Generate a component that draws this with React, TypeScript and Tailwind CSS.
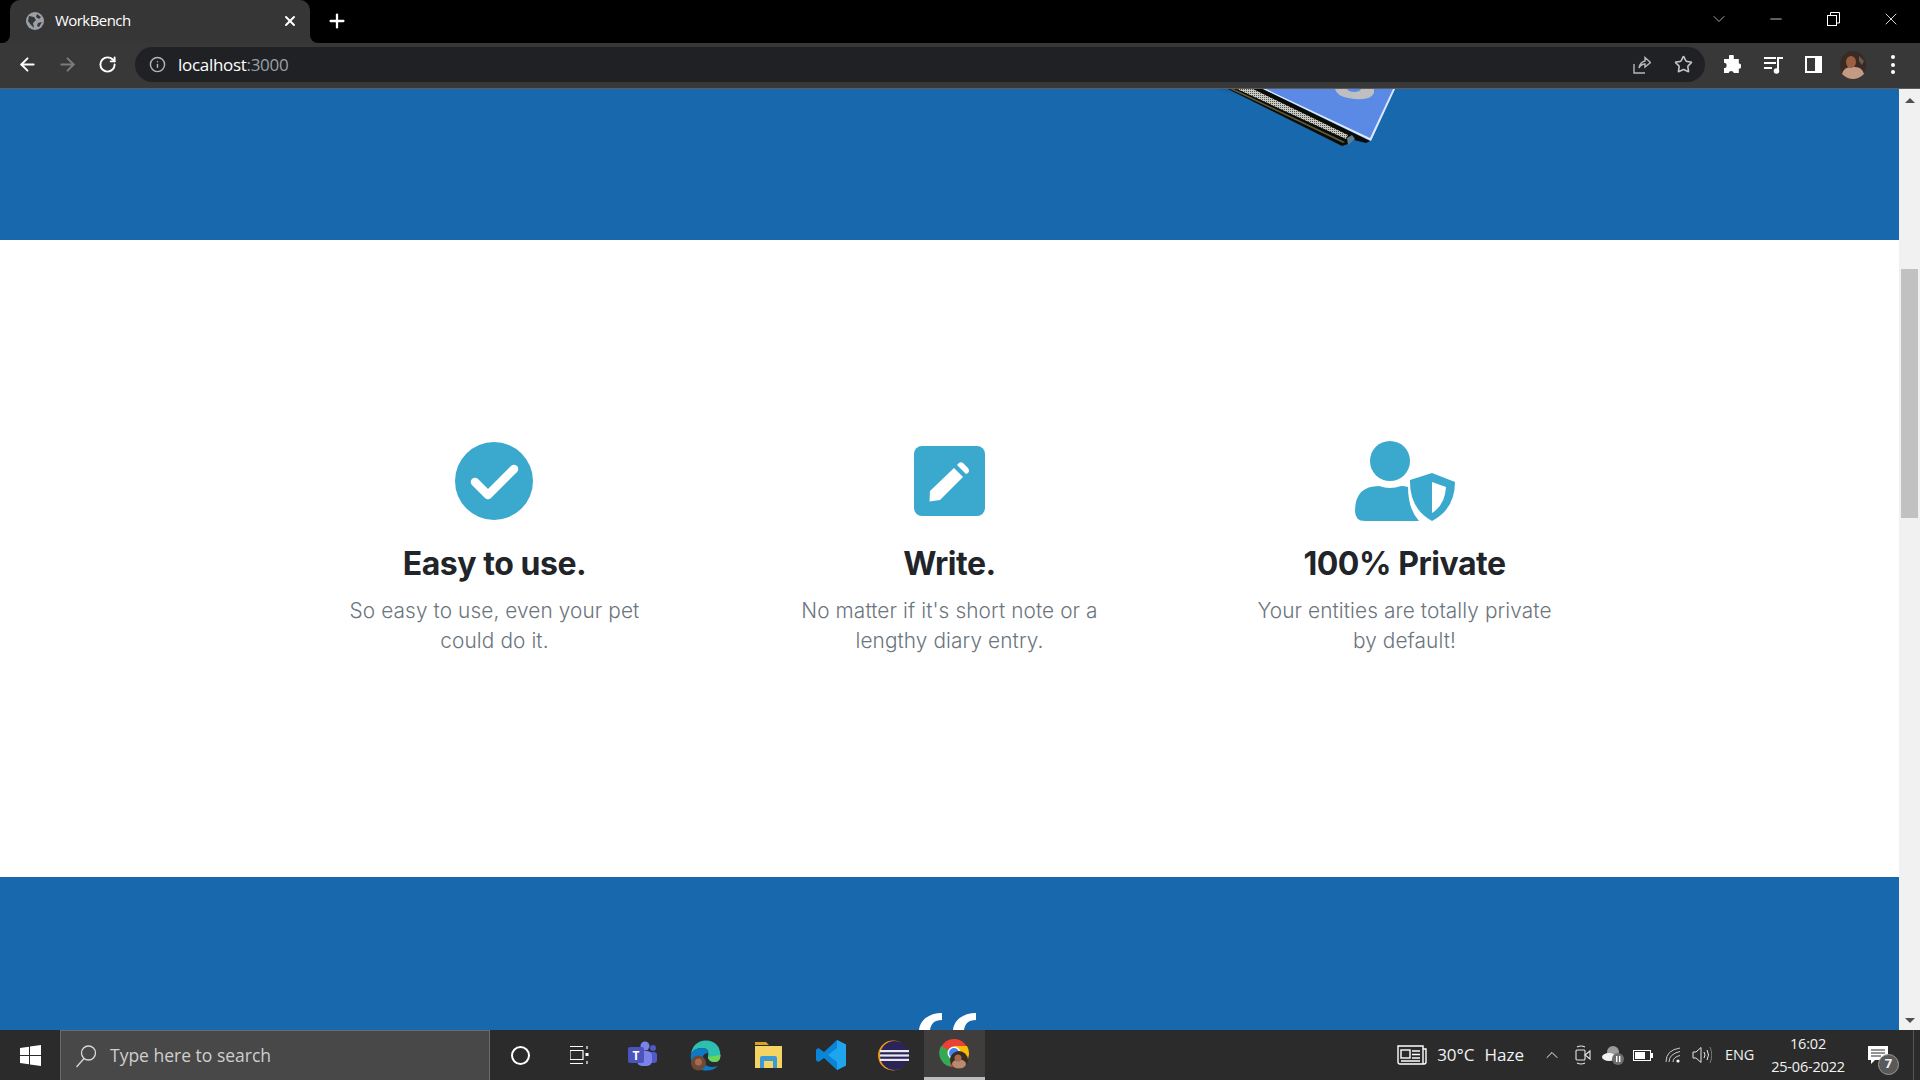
import { ArrowLeft, ArrowRight, RotateCw, Info, Star, Plus, X, ChevronDown, ChevronUp, Minus } from 'lucide-react';

const TEAL = '#3aa9cd';

const features = [
  { title: 'Easy to use.', lines: ['So easy to use, even your pet', 'could do it.'], icon: 'check' },
  { title: 'Write.', lines: ["No matter if it's short note or a", 'lengthy diary entry.'], icon: 'pen' },
  { title: '100% Private', lines: ['Your entities are totally private', 'by default!'], icon: 'user' },
];

function FeatureIcon({ name }: { name: string }) {
  if (name === 'check') {
    return (
      <svg className="mr-[2px]" width="78" height="78" viewBox="0 0 78 78">
        <circle cx="39" cy="39" r="39" fill={TEAL} />
        <path d="M20 40 L33 53 L59 27" fill="none" stroke="#fff" strokeWidth="8.5" strokeLinecap="round" strokeLinejoin="round" />
      </svg>
    );
  }
  if (name === 'pen') {
    return (
      <svg width="71" height="70" viewBox="0 0 71 70">
        <rect width="71" height="70" rx="8" fill={TEAL} />
        <path d="M16 45 L40 22 L49 31 L26 54 L15.5 55.5 Z" fill="#fff" />
        <path d="M43 19 L44 18 Q46 15 49 17 L54 22 Q56 25 54 27 L52 28 Z" fill="#fff" />
      </svg>
    );
  }
  return (
    <svg width="100" height="80" viewBox="0 0 100 80">
      <circle cx="35" cy="20" r="20" fill={TEAL} />
      <path d="M24 45 Q35 49 46 45 Q50 45 53 46 Q53 68 64 80 L10 80 Q0 80 0 70 Q0 45 24 45 Z" fill={TEAL} />
      <path d="M55 39 L77 32 L100 41 Q100 68 77 80 Q55 68 55 41 Z" fill={TEAL} />
      <path d="M77 41 L91 46 Q90 64 77 72 Z" fill="#fff" />
    </svg>
  );
}

function Avatar({ size }: { size: number }) {
  return (
    <svg width={size} height={size} viewBox="0 0 28 28">
      <ellipse cx="14" cy="14" rx="13" ry="14" fill="#3a2a24" />
      <path d="M3 23 Q5 15 14 16 Q23 15 25 23 Q20 28 14 28 Q8 28 3 23 Z" fill="#c39a84" />
      <ellipse cx="12" cy="11" rx="5" ry="6" fill="#9c5f42" />
      <path d="M20 5 L25 10 L23 14 L20 10 Z" fill="#6b5a50" />
    </svg>
  );
}

function Illustration() {
  return (
    <svg className="absolute left-[1200px] top-0" width="210" height="70" viewBox="0 0 210 70">
      <defs>
        <pattern id="dots" width="2" height="2" patternUnits="userSpaceOnUse">
          <rect width="2" height="2" fill="#c9c9c4" />
          <rect width="1" height="1" fill="#55564f" />
        </pattern>
        <linearGradient id="shade" x1="0.55" y1="0" x2="0.42" y2="0.25">
          <stop offset="0" stopColor="#0a3f6c" />
          <stop offset="1" stopColor="#1868ad" />
        </linearGradient>
      </defs>
      <path d="M14 0 L138 59 L147 55 L28 0 Z" fill="url(#shade)" />
      <path d="M28 0 L63 0 L170 52 L166 54 L150 50 L148 55 L142 57 Z" fill="#0b0b06" />
      <path d="M30 0 L34 0 L145 53 L143 54 Z" fill="#5a5b3e" />
      <path d="M37 0 L53 0 L148 46 L146 50 Z" fill="url(#dots)" />
      <path d="M147 49 L152 46 L155 50 L148 56 Z" fill="#5c7d99" />
      <path d="M63 0 L195 0 L171 51 Z" fill="#5b8ae6" />
      <path d="M195 0 L171 52 L63 0 L66 0 L170 49 L193 0 Z" fill="#dfe8fb" />
      <path d="M135 0 Q137 7 148 9 Q170 13 174 4 L174 0 L161 0 Q160 3 154 3 Q149 3 147 0 Z" fill="#bdbfc0" />
    </svg>
  );
}

function TitleBar() {
  return (
    <div className="h-[43px] bg-black flex items-end shrink-0">
      <div className="relative ml-[10px] w-[300px] h-[43px] bg-[#363636] rounded-t-[10px] flex items-center pl-[16px] pr-[12px] pb-[2px]">
        <div className="absolute left-[-8px] bottom-0 w-[8px] h-[8px] bg-[#363636]">
          <div className="w-full h-full bg-black rounded-br-[8px]" />
        </div>
        <div className="absolute right-[-8px] bottom-0 w-[8px] h-[8px] bg-[#363636]">
          <div className="w-full h-full bg-black rounded-bl-[8px]" />
        </div>
        <svg width="18" height="18" viewBox="0 0 18 18">
          <circle cx="9" cy="9" r="9" fill="#9aa0a6" />
          <path d="M3 4 L8 5 L10 8 L7 11 L8 16 L5 13 L2 9 Z M11 2 L15 5 L13 7 L10 5 Z M12 11 L16 10 L13 15 L11 14 Z" fill="#363636" />
        </svg>
        <span className="ml-[11px] text-[15px] text-white font-['Open_Sans',sans-serif] tracking-[-0.55px]">WorkBench</span>
        <X className="ml-auto text-white" size={16} strokeWidth={3} />
      </div>
      <div className="w-[54px] h-[43px] flex items-center justify-center pb-[2px]">
        <Plus className="text-white" size={22} strokeWidth={2.5} />
      </div>
      <div className="flex-1 h-[43px] flex items-center justify-end text-white pb-[5px]">
        <ChevronDown className="mr-[38px] text-[#c9c9c9]" size={20} strokeWidth={1} />
        <Minus className="mr-[42px]" size={18} strokeWidth={1} />
        <svg className="mr-[41px]" width="13" height="14" viewBox="0 0 13 14" fill="none" stroke="#fff">
          <rect x="0.5" y="3.5" width="9" height="10" />
          <path d="M3.5 3.5 V0.5 H12.5 V11 H9.5" />
        </svg>
        <X className="mr-[19px]" size={20} strokeWidth={1} />
      </div>
    </div>
  );
}

function Toolbar() {
  return (
    <div className="h-[46px] bg-[#383838] border-b border-[#5c5c5c] flex items-center shrink-0 pl-[7px] pb-[2px]">
      <div className="w-[40px] flex justify-center">
        <ArrowLeft className="text-white" size={21} strokeWidth={2.2} />
      </div>
      <div className="w-[40px] flex justify-center">
        <ArrowRight className="text-[#7c7c7c]" size={21} strokeWidth={2.2} />
      </div>
      <div className="w-[41px] flex justify-center">
        <RotateCw className="text-white" size={19} strokeWidth={2.4} />
      </div>
      <div className="ml-[7px] w-[1570px] h-[35px] rounded-full bg-[#202124] flex items-center pl-[14px] pr-[12px]">
        <Info className="text-[#b4b6b9]" size={17} strokeWidth={2} />
        <span className="ml-[12px] text-[17px] text-white font-['Open_Sans',sans-serif] tracking-[-0.3px]">
          localhost<span className="text-[#9aa0a6]">:3000</span>
        </span>
        <svg className="ml-auto mr-[23px]" width="18" height="18" viewBox="0 0 18 18" fill="none" stroke="#b4b6b9" strokeWidth="1.4">
          <path d="M1 8 V17 H12 M6 12 Q7 6 12 5 V1.5 L17.5 6.5 L12 11 V8 Q8 8 6 12 Z" />
        </svg>
        <Star className="text-[#c4c7ca]" size={19} strokeWidth={2} />
      </div>
      <div className="w-[47px] flex justify-center ml-[3px]">
        <svg width="18" height="19" viewBox="0 0 18 19" fill="#fff">
          <path d="M6 1.5 a2.4 2.4 0 0 1 4.8 0 V4 h5 v4.5 a2.6 2.6 0 0 1 0 5.2 V18 h-5 a2.7 2.7 0 0 0 -5.2 0 H1 v-5 a2.6 2.6 0 0 0 0 -5.2 V4 h5 Z" />
        </svg>
      </div>
      <div className="w-[36px] flex justify-center">
        <svg width="19" height="18" viewBox="0 0 19 18" fill="#fff">
          <rect x="0" y="1" width="12" height="2" />
          <rect x="0" y="6" width="12" height="2" />
          <rect x="0" y="11" width="8" height="2" />
          <rect x="13" y="1" width="6" height="2" />
          <rect x="13" y="1" width="2" height="14" />
          <circle cx="12.5" cy="15" r="2.8" />
        </svg>
      </div>
      <div className="w-[44px] flex justify-center">
        <svg width="17" height="17" viewBox="0 0 17 17">
          <rect width="17" height="17" fill="#fff" />
          <rect x="2" y="2" width="8" height="13" fill="#383838" />
        </svg>
      </div>
      <div className="w-[36px] flex justify-center">
        <Avatar size={28} />
      </div>
      <div className="w-[44px] flex flex-col items-center gap-[3.5px]">
        <div className="w-[4px] h-[4px] rounded-full bg-white" />
        <div className="w-[4px] h-[4px] rounded-full bg-white" />
        <div className="w-[4px] h-[4px] rounded-full bg-white" />
      </div>
    </div>
  );
}

function TrayIcon({ className, children }: { className: string; children: React.ReactNode }) {
  return <div className={`flex items-center justify-center ${className}`}>{children}</div>;
}

function Taskbar() {
  return (
    <div className="h-[50px] bg-[#2b2b2b] flex items-stretch shrink-0 text-white font-['Open_Sans',sans-serif]">
      <div className="w-[60px] flex items-center justify-center">
        <svg width="21" height="21" viewBox="0 0 21 21" fill="#fff">
          <path d="M0 3 L9 1.7 V10 H0 Z M10 1.5 L21 0 V10 H10 Z M0 11 H9 V19.3 L0 18 Z M10 11 H21 V21 L10 19.5 Z" />
        </svg>
      </div>
      <div className="w-[430px] bg-[#484848] border border-[#6b6b6b] border-b-0 flex items-center pl-[14px]">
        <svg width="22" height="24" viewBox="0 0 22 24" fill="none" stroke="#d9d9d9" strokeWidth="1.3">
          <circle cx="13.5" cy="9" r="7" />
          <path d="M9 14.5 L1.5 23" />
        </svg>
        <span className="ml-[13px] text-[17.5px] text-[#cfcfcf]">Type here to search</span>
      </div>
      <div className="w-[60px] flex items-center justify-center">
        <div className="w-[19px] h-[19px] rounded-full border-[2.5px] border-white" />
      </div>
      <div className="w-[60px] flex items-center justify-center">
        <svg width="20" height="20" viewBox="0 0 20 20" fill="none" stroke="#fff" strokeWidth="1.2">
          <path d="M0 1.5 H13 M0 18.5 H13 M0 5.5 H13 V14.5 H0 Z M17 1 V4 M17 16 V19" />
          <rect x="15.5" y="8" width="3" height="3" fill="#fff" stroke="none" />
        </svg>
      </div>
      <div className="w-[63px] flex items-center justify-center">
        <svg width="30" height="30" viewBox="0 0 30 30">
          <circle cx="18" cy="6" r="4.5" fill="#7b83eb" />
          <circle cx="26" cy="8" r="3" fill="#5059c9" />
          <rect x="21" y="12" width="9" height="11" rx="3" fill="#5059c9" />
          <rect x="10" y="11" width="15" height="15" rx="5" fill="#7b83eb" />
          <rect x="1" y="7" width="16" height="16" rx="2" fill="#4b53bc" />
          <text x="9" y="19.5" fontSize="12" fontWeight="700" fill="#fff" textAnchor="middle" fontFamily="Open Sans, sans-serif">T</text>
        </svg>
      </div>
      <div className="w-[65px] flex items-center justify-center">
        <svg width="31" height="31" viewBox="0 0 31 31">
          <path d="M1 14 Q3 1 16 0.5 Q30 1 30.5 16 Q30 22 25 22 Q18 22 18 17 Q20 8 12 8 Q4 8 1 14 Z" fill="#2dbfb0" />
          <path d="M18 17 L30.5 15 Q30 22 25 22 Q19 22 18 17 Z" fill="#6fd558" />
          <path d="M12 8 Q4 8 1 14 Q-1 26 12 30 Q22 32 28 26 Q18 29 14 23 Q10 14 18 13 Q17 8 12 8 Z" fill="#0c7ac4" />
          <circle cx="8.5" cy="23" r="7.5" fill="#6b4a3a" />
          <circle cx="8.5" cy="22" r="3.5" fill="#a9694a" />
        </svg>
      </div>
      <div className="w-[62px] flex items-center justify-center">
        <svg width="28" height="28" viewBox="0 0 28 28">
          <path d="M0 1 H11 L14 4 H0 Z" fill="#d9a21f" />
          <rect x="0" y="5" width="27" height="22" fill="#f6d463" />
          <path d="M5 27 V17 Q5 15 7 15 H20 Q22 15 22 17 V27 H18 V20 H9 V27 Z" fill="#3d9ad9" />
        </svg>
      </div>
      <div className="w-[62px] flex items-center justify-center">
        <svg width="30" height="30" viewBox="0 0 30 30">
          <path d="M21 0 L30 4.5 V25.5 L21 30 L8 18 L2.5 22 L0 20.5 V9.5 L2.5 8 L8 12 Z" fill="#0a84d6" />
          <path d="M21 0 L30 4.5 V25.5 L21 30 Z M21 8 L12 15 L21 22 Z" fill="#1fa5ee" />
        </svg>
      </div>
      <div className="w-[62px] flex items-center justify-center">
        <svg width="31" height="31" viewBox="0 0 31 31">
          <circle cx="15" cy="15.5" r="15" fill="#f09b20" />
          <circle cx="16.5" cy="15.5" r="14.5" fill="#2b2456" />
          <rect x="2" y="10" width="29" height="2.2" fill="#e8e8f2" />
          <rect x="2" y="14.4" width="29" height="2.2" fill="#e8e8f2" />
          <rect x="2" y="18.8" width="29" height="2.2" fill="#e8e8f2" />
        </svg>
      </div>
      <div className="w-[61px] bg-[#3f3e3d] border-b-[3px] border-[#bdbdbd] flex items-center justify-center">
        <svg width="31" height="31" viewBox="0 0 31 31">
          <circle cx="15" cy="15" r="14" fill="#ea4335" />
          <path d="M15 15 L2 8 A14 14 0 0 0 11 28.5 Z" fill="#34a853" />
          <path d="M15 15 L15 1 A14 14 0 0 1 28 10 Z" fill="#ea4335" />
          <path d="M15 8 H28 A14 14 0 0 1 27 24 Z" fill="#fbbc05" />
          <circle cx="15" cy="15" r="6.5" fill="#fff" />
          <circle cx="15" cy="15" r="5" fill="#4285f4" />
          <circle cx="20" cy="22" r="9" fill="#3a2a24" />
          <ellipse cx="20" cy="26" rx="7" ry="4.5" fill="#b98a72" />
          <circle cx="19" cy="20" r="3.5" fill="#a9694a" />
        </svg>
      </div>

      <div className="ml-auto flex items-center text-[#f2f2f2]">
        <TrayIcon className="w-[30px]">
          <svg width="30" height="20" viewBox="0 0 30 20" fill="none" stroke="#fff" strokeWidth="1.4">
            <path d="M1 1 H26 V18 Q26 19 27 19 H3 Q1 19 1 17 Z M26 4 H29 V17 Q29 19 27 19" />
            <rect x="4" y="5" width="9" height="8" />
            <path d="M15 6 H23 M15 9.5 H23 M15 13 H23 M4 16 H23" />
          </svg>
        </TrayIcon>
        <span className="ml-[10px] text-[17px]">30°C</span>
        <span className="ml-[10px] text-[17px]">Haze</span>
        <ChevronUp className="ml-[18px]" size={20} strokeWidth={1.2} />
        <TrayIcon className="ml-[13px] w-[16px]">
          <svg width="16" height="20" viewBox="0 0 16 20" fill="none" stroke="#e6e6e6" strokeWidth="1.1">
            <path d="M2 2 Q6 0 10 2 M2 18 Q6 20 10 18" />
            <rect x="1" y="5" width="9" height="10" rx="1" />
            <path d="M10 10 L15 6 V14 Z" />
          </svg>
        </TrayIcon>
        <TrayIcon className="ml-[11px] w-[22px]">
          <svg width="22" height="20" viewBox="0 0 22 20">
            <circle cx="11" cy="7" r="6" fill="#9b9b9b" />
            <ellipse cx="7" cy="12" rx="7" ry="4" fill="#f2f2f2" />
            <circle cx="16" cy="14" r="6" fill="#6e6e6e" />
            <rect x="14" y="11" width="1.4" height="6" fill="#fff" />
            <rect x="17" y="11" width="1.4" height="6" fill="#fff" />
          </svg>
        </TrayIcon>
        <TrayIcon className="ml-[9px] w-[20px]">
          <svg width="20" height="11" viewBox="0 0 20 11">
            <rect x="0.5" y="0.5" width="17" height="10" fill="none" stroke="#fff" />
            <rect x="2" y="2" width="10" height="7" fill="#fff" />
            <rect x="18" y="3" width="2" height="5" fill="#fff" />
          </svg>
        </TrayIcon>
        <TrayIcon className="ml-[12px] w-[16px]">
          <svg width="16" height="16" viewBox="0 0 16 16" fill="none" stroke="#c9c9c9">
            <path d="M1 15 Q1 3 15 1 M4 15 Q4 7 15 4.5 M8 15 Q8 10 15 8.5" />
            <circle cx="13" cy="14" r="1.6" fill="#fff" stroke="none" />
          </svg>
        </TrayIcon>
        <TrayIcon className="ml-[11px] w-[20px]">
          <svg width="20" height="18" viewBox="0 0 20 18" fill="none" stroke="#e6e6e6">
            <path d="M1 6 H4 L9 1.5 V16.5 L4 12 H1 Z M12 6 Q14 9 12 12 M15 4 Q18 9 15 14" />
            <path d="M18 1 Q21.5 9 18 17" stroke="#777" />
          </svg>
        </TrayIcon>
        <span className="ml-[13px] text-[14.5px] tracking-[-0.2px]">ENG</span>
        <div className="ml-[15px] w-[78px] flex flex-col items-center text-[14.5px] leading-[23px] tracking-[-0.2px]">
          <span>16:02</span>
          <span>25-06-2022</span>
        </div>
        <div className="relative ml-[21px] mr-[25px] w-[20px]">
          <svg width="20" height="19" viewBox="0 0 20 19">
            <path d="M0 0 H20 V14 H7 L3 18 V14 H0 Z" fill="#fff" />
            <path d="M3 4 H17 M3 7 H17 M3 10 H13" stroke="#2b2b2b" />
          </svg>
          <div className="absolute left-[10px] top-[8px] w-[21px] h-[21px] rounded-full bg-[#595959] border border-[#9a9a9a] flex items-center justify-center text-[13px] font-bold">
            7
          </div>
        </div>
        <div className="w-px self-stretch bg-[#555555] mr-[6px]" />
      </div>
    </div>
  );
}

export default function App() {
  return (
    <div className="w-[1920px] h-[1080px] flex flex-col overflow-hidden bg-black">
      <TitleBar />
      <Toolbar />
      <div className="flex-1 min-h-0 flex">
        <div className="flex-1 flex flex-col overflow-hidden">
          <div className="relative h-[151px] bg-[#1868ad] shrink-0 overflow-hidden">
            <Illustration />
          </div>
          <div className="h-[637px] bg-white shrink-0 pt-[201px] font-['Inter',sans-serif]">
            <div className="w-[1365px] mx-auto grid grid-cols-3">
              {features.map((f) => (
                <div key={f.title} className="flex flex-col items-center text-center">
                  <div className="h-[80px] flex items-center justify-center">
                    <FeatureIcon name={f.icon} />
                  </div>
                  <h3 className="mt-[24px] text-[32px] leading-[38px] font-bold text-[#212529] tracking-[-0.45px]">{f.title}</h3>
                  <p className="mt-[13px] text-[20.8px] leading-[30px] font-light text-[#6c757d] whitespace-nowrap tracking-[0.1px]">
                    {f.lines[0]}
                    <br />
                    {f.lines[1]}
                  </p>
                </div>
              ))}
            </div>
          </div>
          <div className="flex-1 bg-[#1868ad] flex justify-center pt-[136px] overflow-hidden">
            <svg className="shrink-0 ml-[-4px]" width="58" height="17" viewBox="0 0 58 17" fill="#fff">
              <path d="M0 17 C1 7 10 0 23 0 L23 7 C15 7 12 11 11 17 Z" />
              <path d="M34 17 C35 7 44 0 57 0 L57 7 C49 7 46 11 45 17 Z" />
            </svg>
          </div>
        </div>
        <div className="relative w-[21px] bg-[#f1f1f1] shrink-0 flex flex-col items-center">
          <div className="mt-[9px] w-0 h-0 border-x-[5px] border-x-transparent border-b-[5px] border-b-[#505050]" />
          <div className="mt-[166px] w-[17px] h-[249px] bg-[#c1c1c1]" />
          <div className="mt-auto mb-[7px] w-0 h-0 border-x-[5px] border-x-transparent border-t-[5px] border-t-[#505050]" />
        </div>
      </div>
      <Taskbar />
    </div>
  );
}
